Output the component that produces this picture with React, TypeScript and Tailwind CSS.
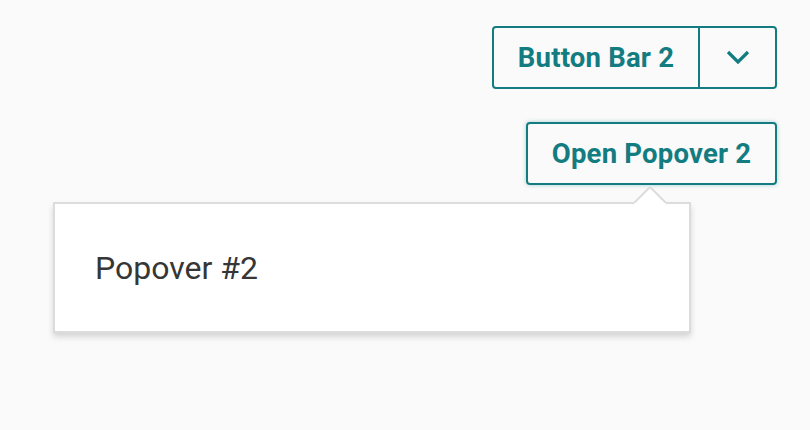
import React from "react";

export default function App() {
  return (
    <div className="relative w-[810px] h-[430px] bg-[#fafafa] overflow-hidden" style={{ fontFamily: "Roboto, 'Noto Sans', sans-serif" }}>
      <div className="flex flex-col items-end pt-[26px] pr-[33px] gap-[33px]">
        <div className="flex h-[63px] border-2 border-[#137c81] rounded-[4px] text-[#137c81]">
          <button className="w-[204px] h-full flex items-center justify-center text-[27.5px] font-bold tracking-[0.2px]">
            Button Bar 2
          </button>
          <div className="w-[2px] bg-[#137c81]" />
          <button className="w-[75px] h-full flex items-center justify-center">
            <svg width="24" height="15" viewBox="0 0 24 15" fill="none">
              <path d="M2 2 L12 12 L22 2" stroke="#137c81" strokeWidth="3.2" strokeLinecap="butt" />
            </svg>
          </button>
        </div>
        <button className="w-[251px] h-[63px] border-2 border-[#137c81] rounded-[4px] text-[#137c81] text-[27.5px] font-bold flex items-center justify-center shadow-[0_0_4px_rgba(19,124,129,0.35)] tracking-[0.2px]">
          Open Popover 2
        </button>
      </div>
      <div className="absolute left-[53px] top-[202px] w-[638px] h-[131px] bg-white border-2 border-[#dcdcdc] shadow-[0_4px_6px_rgba(0,0,0,0.15)] flex items-center pl-[40px]">
        <span className="text-[32px] text-[#363636] leading-none">Popover #2</span>
        <svg className="absolute" style={{ left: 578, top: -17 }} width="34" height="18" viewBox="0 0 34 18">
          <path d="M0 17 L17 0 L34 17" fill="white" stroke="#dcdcdc" strokeWidth="2" />
          <rect x="1" y="16" width="32" height="3" fill="white" />
        </svg>
      </div>
    </div>
  );
}
